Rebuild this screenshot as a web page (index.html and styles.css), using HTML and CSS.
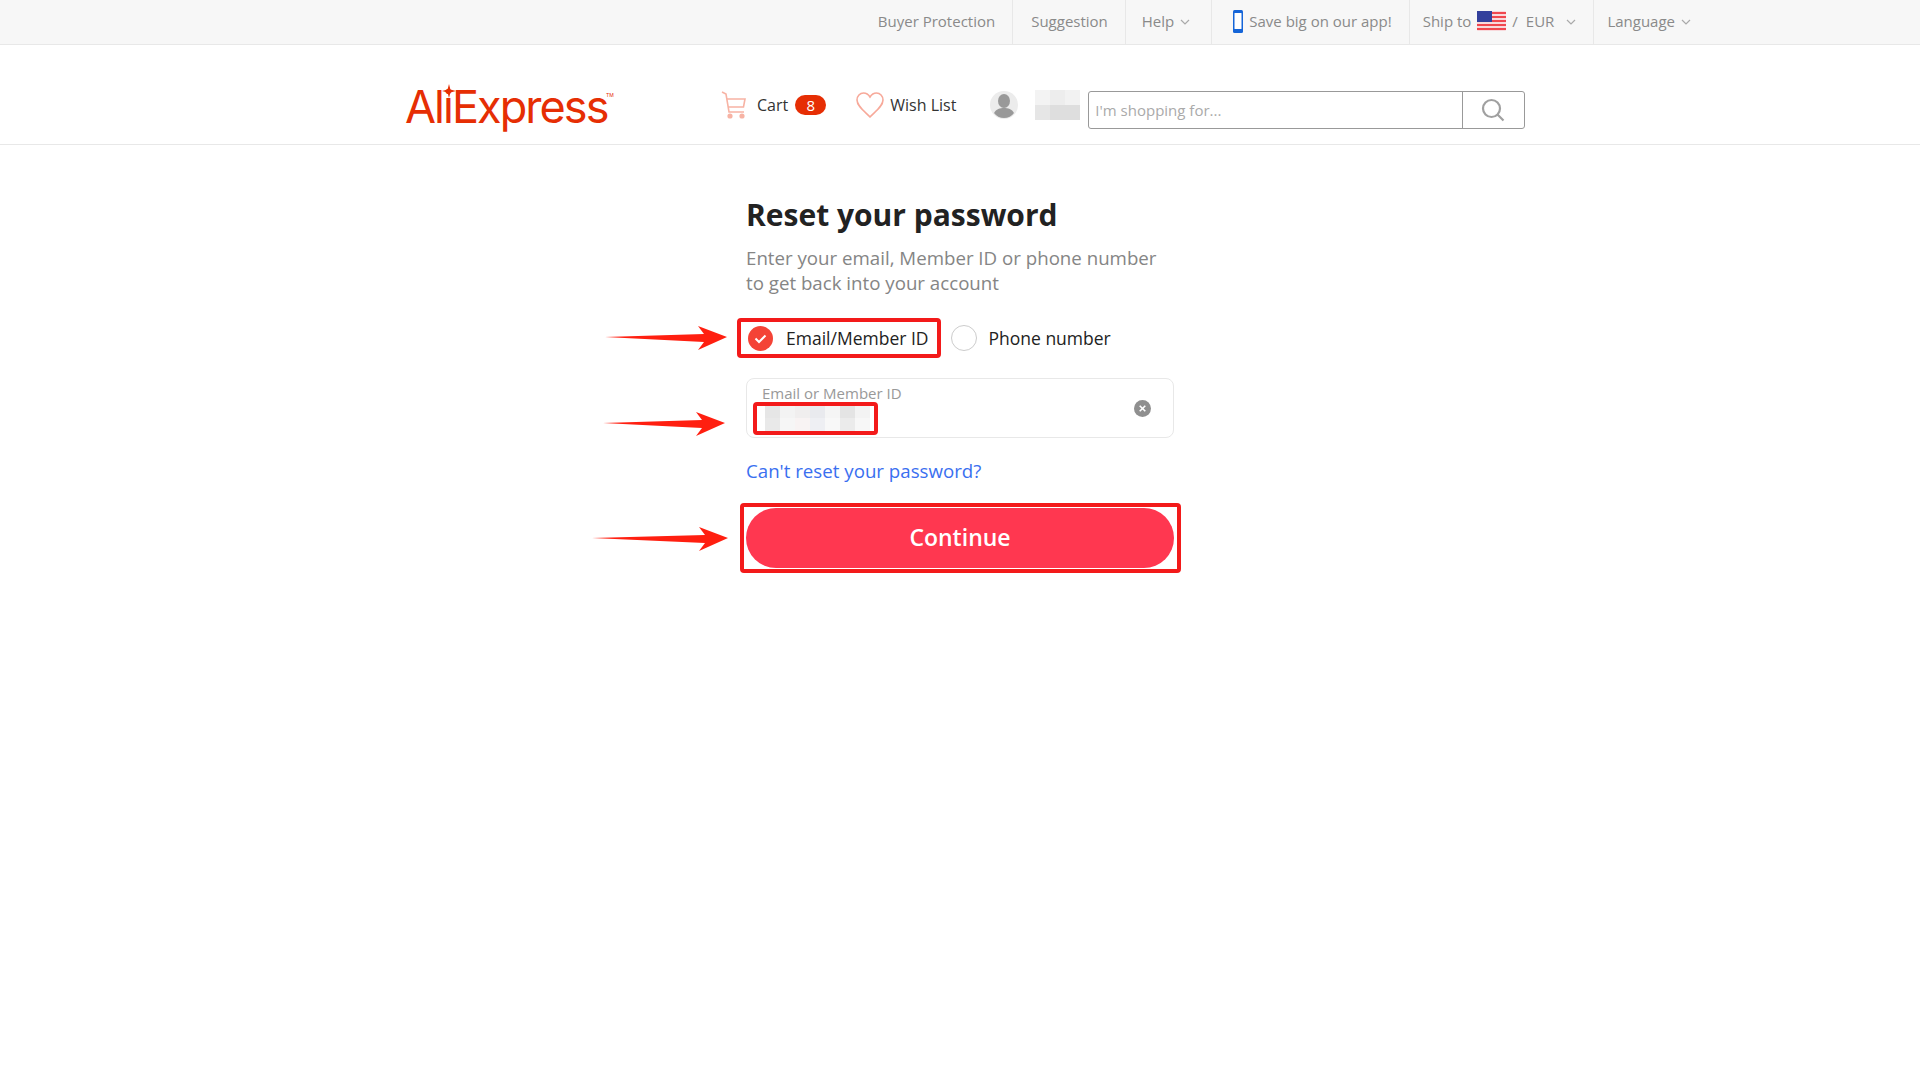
FILE: index.html
```html
<!DOCTYPE html>
<html lang="en">
<head>
    <meta charset="UTF-8">
    <meta name="viewport" content="width=device-width, initial-scale=1.0">
    <title>Reset your password</title>
    <link rel="stylesheet" href="styles.css">
</head>
<body>
    <div class="top-bar">
        <a class="top-item">Buyer Protection</a>
        <a class="top-item">Suggestion</a>
        <a class="top-item top-help">Help <svg class="chev" viewBox="0 0 10 6"><path d="M1 1l4 4 4-4"/></svg></a>
        <a class="top-item top-app">
            <svg class="phone" viewBox="0 0 10 23"><rect width="10" height="23" rx="1.5" fill="#1565d8"/><rect x="1.5" y="3" width="7" height="16" rx="0.5" fill="#fff"/></svg>
            Save big on our app!
        </a>
        <a class="top-item top-ship">
            Ship to
            <svg class="flag" viewBox="0 0 29 20">
                <rect width="29" height="20" rx="1" fill="#f8d9dc"/>
                <path d="M0 1h29v2H0zM0 5h29v2H0zM0 9h29v2H0zM0 13h29v2H0zM0 17h29v2H0z" fill="#f0474f"/>
                <rect width="15" height="11" fill="#33409c"/>
            </svg>
            <span class="slash">/</span> EUR <svg class="chev chev-ship" viewBox="0 0 10 6"><path d="M1 1l4 4 4-4"/></svg>
        </a>
        <a class="top-item top-lang">Language <svg class="chev" viewBox="0 0 10 6"><path d="M1 1l4 4 4-4"/></svg></a>
    </div>

    <div class="header">
        <div class="logo">
            <span>AliExpress</span>
            <span class="tm">TM</span>
            <svg class="logo-star" viewBox="0 0 14 14"><path d="M7 0l1.400 5.600L14 7l-5.600 1.400L7 14 5.600 8.400 0 7l5.600-1.400z"/></svg>
        </div>
        <div class="cart">
            <svg class="cart-icon" viewBox="0 0 26 28" fill="none" stroke="#f7b3a4" stroke-width="1.6">
                <path d="M1 1l4 2 3 18h15"/>
                <path d="M6 8h18l-1.500 8H7"/>
                <circle cx="9" cy="25" r="1.800" fill="#f7b3a4"/>
                <circle cx="21" cy="25" r="1.800" fill="#f7b3a4"/>
            </svg>
            <span>Cart</span>
            <span class="badge">8</span>
        </div>
        <div class="wish">
            <svg class="heart" viewBox="0 0 28 26" fill="none" stroke="#f7a99a" stroke-width="1.6">
                <path d="M14 25C8 19 1 14 1 8c0-4 3-7 6.500-7C10 1 12.500 2.500 14 5c1.500-2.500 4-4 6.500-4C24 1 27 4 27 8c0 6-7 11-13 17z"/>
            </svg>
            <span>Wish List</span>
        </div>
        <svg class="avatar" viewBox="0 0 28 28">
            <circle cx="14" cy="14" r="14" fill="#ececec"/>
            <ellipse cx="14" cy="10" rx="6" ry="7" fill="#999"/>
            <path d="M4 22c2-4 6-5 10-5s8 1 10 5c-2 3-6 5-10 5s-8-2-10-5z" fill="#999"/>
        </svg>
        <div class="user-blur"></div>
        <div class="search">
            <div class="search-text">I'm shopping for...</div>
            <div class="search-btn">
                <svg class="search-icon" viewBox="0 0 24 24" fill="none" stroke="#a0a0a0" stroke-width="2.200">
                    <circle cx="10.500" cy="10.500" r="8.500"/>
                    <path d="M16.500 16.500l6 6"/>
                </svg>
            </div>
        </div>
    </div>

    <div class="main">
        <h1 class="title">Reset your password</h1>
        <p class="subtitle">Enter your email, Member ID or phone number<br>to get back into your account</p>

        <div class="radio-row">
            <div class="radio-item radio-email">
                <svg class="radio-on" viewBox="0 0 25 25">
                    <circle cx="12.500" cy="12.500" r="12.500" fill="#f44336"/>
                    <path d="M7.500 12.500l3.500 3.500 6.500-6.500" fill="none" stroke="#fff" stroke-width="2"/>
                </svg>
                <span>Email/Member ID</span>
            </div>
            <div class="radio-item radio-phone">
                <span class="radio-off"></span>
                <span>Phone number</span>
            </div>
        </div>

        <div class="field">
            <div class="field-label">Email or Member ID</div>
            <div class="field-value"></div>
            <svg class="field-clear" viewBox="0 0 17 17">
                <circle cx="8.500" cy="8.500" r="8.500" fill="#8f8f8f"/>
                <path d="M5.700 5.700l5.600 5.600M11.300 5.700l-5.600 5.600" stroke="#fff" stroke-width="1.600"/>
            </svg>
        </div>

        <a class="help-link">Can't reset your password?</a>
        <button class="continue">Continue</button>
    </div>

    <!-- annotations drawn over the page -->
    <div class="mark mark-radio"></div>
    <div class="mark mark-value"></div>
    <div class="mark mark-button"></div>
    <svg class="arrow arrow-radio" viewBox="0 0 122 24"><path d="M0 11l99-3-6-8 29 11-29 13 6-8z"/></svg>
    <svg class="arrow arrow-value" viewBox="0 0 122 24"><path d="M0 11l99-3-6-8 29 11-29 13 6-8z"/></svg>
    <svg class="arrow arrow-button" viewBox="0 0 136 24"><path d="M0 11l113-3-6-8 29 11-29 13 6-8z"/></svg>
</body>
</html>
```
FILE: styles.css
```css
* {
    box-sizing: border-box;
}

body {
    margin: 0;
    height: 1080px;
    overflow: hidden;
    position: relative;
    background: #fff;
    font-family: "Open Sans", Arial, sans-serif;
    color: #333;
}

/* top bar */
.top-bar {
    height: 45px;
    display: flex;
    justify-content: flex-end;
    padding-right: 229px;
    background: #f7f7f7;
    border-bottom: 1px solid #e8e8e8;
}

.top-item {
    display: flex;
    align-items: center;
    padding: 0 17px 2px 18px;
    font-size: 15px;
    color: #8a8a8a;
    border-right: 1px solid #e8e8e8;
    white-space: nowrap;
}

.top-help {
    padding-left: 16px;
    padding-right: 21px;
}

.top-app {
    padding-left: 21px;
}

.top-ship {
    padding-left: 13px;
}

.top-lang {
    padding-left: 13px;
    padding-right: 0;
    border-right: 0;
}

.chev {
    width: 10px;
    height: 6px;
    margin: 2px 0 0 6px;
    fill: none;
    stroke: #aaa;
    stroke-width: 1.2;
}

.chev-ship {
    margin-left: 12px;
}

.phone {
    width: 10px;
    height: 23px;
    margin-right: 6px;
}

.flag {
    width: 29px;
    height: 20px;
    margin: 0 6px;
}

.slash {
    margin: 0 8px 0 0;
}

/* logo row */
.header {
    height: 100px;
    display: flex;
    align-items: flex-start;
    padding-left: 405px;
    border-bottom: 1px solid #e8e8e8;
}

.logo {
    position: relative;
    width: 316px;
    margin-top: 32px;
    font-family: Inter, "Liberation Sans", sans-serif;
    font-size: 45px;
    line-height: 60px;
    font-weight: 400;
    letter-spacing: -1.950px;
    color: #e62e04;
}

.tm {
    position: absolute;
    left: 201px;
    top: 14px;
    font-size: 5px;
    line-height: 8px;
    letter-spacing: 0;
}

.logo-star {
    position: absolute;
    left: 37px;
    top: 7px;
    width: 14px;
    height: 14px;
    fill: #e62e04;
}

.cart {
    display: flex;
    align-items: center;
    height: 28px;
    margin-top: 46px;
    font-size: 16px;
    color: #333;
}

.cart-icon {
    width: 26px;
    height: 28px;
    margin-right: 10px;
}

.badge {
    width: 31px;
    height: 20px;
    margin-left: 7px;
    border-radius: 10px;
    background: #e62e04;
    color: #fff;
    font-size: 15px;
    line-height: 20px;
    text-align: center;
}

.wish {
    display: flex;
    align-items: center;
    height: 28px;
    margin: 46px 0 0 30px;
    font-size: 16px;
}

.heart {
    width: 28px;
    height: 26px;
    margin-right: 6px;
}

.avatar {
    width: 28px;
    height: 28px;
    margin: 46px 0 0 34px;
}

.user-blur {
    width: 45px;
    height: 30px;
    margin: 45px 0 0 17px;
    background:
        linear-gradient(to right, #f3f3f3 0, #f3f3f3 15px, #ededed 15px, #ededed 30px, #f2f2f2 30px) top / 100% 15px no-repeat,
        linear-gradient(to right, #e6e6e6 0, #e6e6e6 15px, #dedede 15px) bottom / 100% 15px no-repeat;
}

.search {
    width: 437px;
    height: 38px;
    display: flex;
    margin: 46px 0 0 8px;
    border: 1px solid #999;
    border-radius: 3px;
}

.search-text {
    flex: 1;
    padding-left: 6px;
    font-size: 15px;
    line-height: 36px;
    color: #aaa;
}

.search-btn {
    width: 62px;
    display: flex;
    align-items: center;
    justify-content: center;
    padding-right: 2px;
    border-left: 1px solid #999;
}

.search-icon {
    width: 24px;
    height: 24px;
}

/* form */
.main {
    width: 428px;
    margin-left: 746px;
    padding-top: 48px;
}

.title {
    margin: 0;
    font-size: 30px;
    line-height: 44px;
    font-weight: 700;
    color: #222;
}

.subtitle {
    margin: 8px 0 0;
    font-size: 18.700px;
    line-height: 25px;
    color: #858585;
}

.radio-row {
    display: flex;
    align-items: center;
    height: 26px;
    margin-top: 30px;
    padding-left: 2px;
    font-size: 17.500px;
    color: #222;
}

.radio-item {
    display: flex;
    align-items: center;
}

.radio-on {
    width: 25px;
    height: 25px;
    margin-right: 13px;
}

.radio-off {
    width: 26px;
    height: 26px;
    margin-right: 12px;
    border: 1px solid #ccc;
    border-radius: 50%;
}

.radio-phone {
    margin-left: 22px;
}

.field {
    position: relative;
    height: 60px;
    margin-top: 27px;
    padding: 5px 15px;
    border: 1px solid #e8e8e8;
    border-radius: 8px;
}

.field-label {
    font-size: 15px;
    line-height: 18px;
    color: #999;
}

.field-value {
    width: 105px;
    height: 28px;
    margin: 2px 0 0 3px;
    background:
        linear-gradient(to right, #e6e6e6 0, #e6e6e6 15px, #f3f3f3 15px, #f3f3f3 30px, #f0eeee 30px, #f0eeee 45px, #e9eaee 45px, #e9eaee 60px, #f5f5f5 60px, #f5f5f5 75px, #e4e4e4 75px, #e4e4e4 90px, #f3f3f3 90px) top / 100% 14px no-repeat,
        linear-gradient(to right, #e9e9e9 0, #e9e9e9 15px, #f6f6f6 15px, #f6f6f6 30px, #f8f3f3 30px, #f8f3f3 45px, #eeeff3 45px, #eeeff3 60px, #f8f8f8 60px, #f8f8f8 75px, #ebebeb 75px, #ebebeb 90px, #f7f7f7 90px) bottom / 100% 14px no-repeat;
}

.field-clear {
    position: absolute;
    right: 22px;
    top: 21px;
    width: 17px;
    height: 17px;
}

.help-link {
    display: block;
    margin-top: 20px;
    font-size: 18.700px;
    line-height: 25px;
    color: #3a6ff0;
}

.continue {
    display: block;
    width: 100%;
    height: 60px;
    margin-top: 25px;
    padding: 0 0 2px;
    border: 0;
    border-radius: 30px;
    background: #ff3750;
    color: #fff;
    font-family: inherit;
    font-size: 23px;
    font-weight: 600;
}

/* annotations */
.mark {
    position: absolute;
    border: 4px solid #f31a1a;
    border-radius: 4px;
}

.mark-radio {
    left: 737px;
    top: 318px;
    width: 204px;
    height: 40px;
}

.mark-value {
    left: 753px;
    top: 402px;
    width: 125px;
    height: 33px;
}

.mark-button {
    left: 740px;
    top: 503px;
    width: 441px;
    height: 70px;
}

.arrow {
    position: absolute;
    height: 24px;
    fill: #ff1f10;
}

.arrow-radio {
    left: 605px;
    top: 326px;
    width: 122px;
}

.arrow-value {
    left: 603px;
    top: 412px;
    width: 122px;
}

.arrow-button {
    left: 592px;
    top: 527px;
    width: 136px;
}
```
